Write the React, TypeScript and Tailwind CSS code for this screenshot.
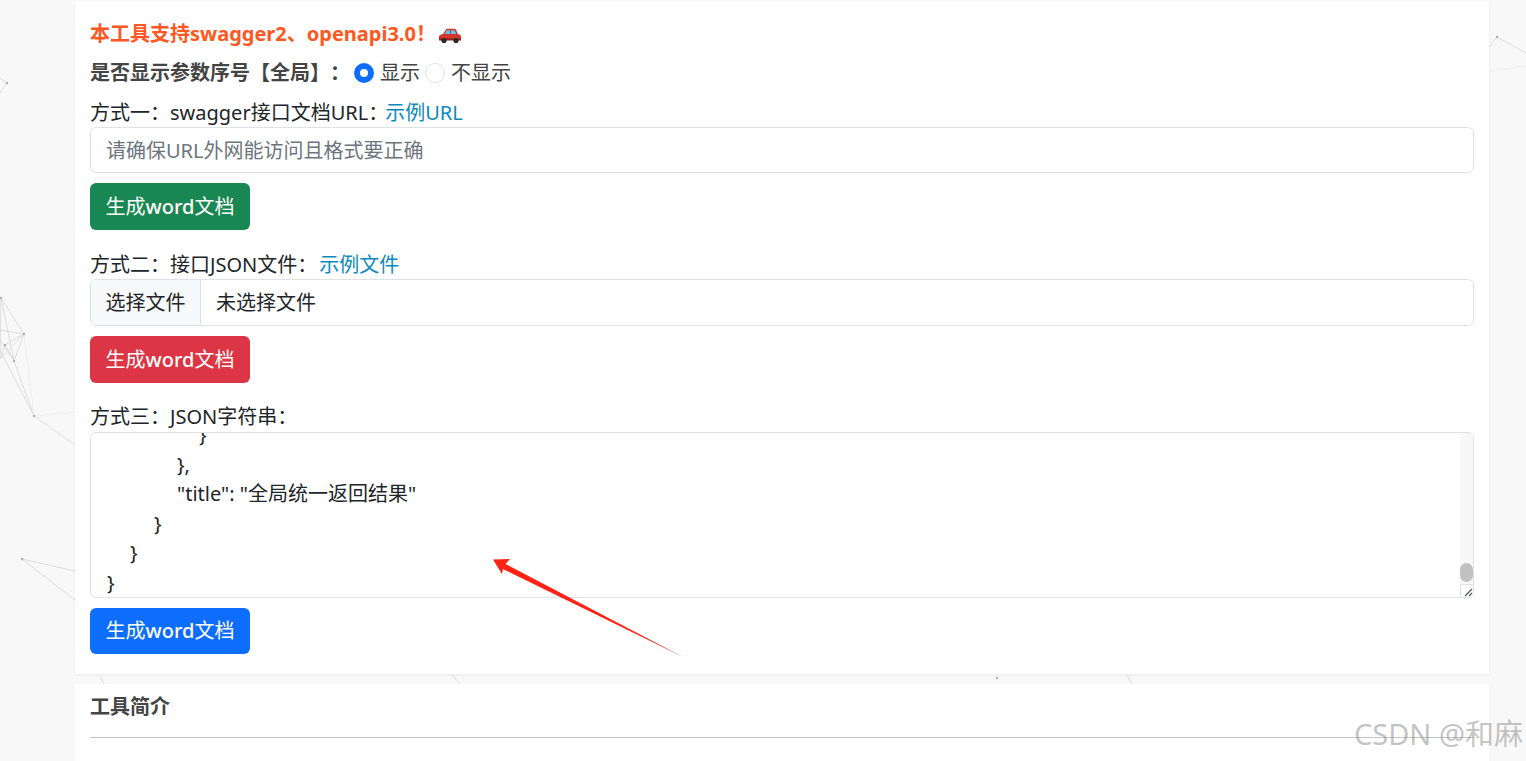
const FONT = "font-['Noto_Sans','Noto_Sans_CJK_SC',sans-serif]"

// faint particle network behind the cards
const lines = [
  [1, 298, 24, 334], [1, 298, 14, 361], [1, 298, 0, 359], [0, 330, 24, 334], [5, 345, 24, 334],
  [14, 361, 24, 334], [0, 359, 24, 334], [5, 345, 14, 361], [5, 345, 0, 359], [0, 340, 14, 361],
  [14, 361, 34, 416], [0, 350, 34, 416], [34, 416, 75, 445], [22, 559, 75, 571], [22, 559, 75, 600],
  [0, 78, 7, 83], [0, 93, 7, 83], [1489, 47, 1497, 37], [1497, 37, 1526, 53],
  [452, 675, 460, 684], [1127, 675, 1132, 684], [100, 676, 104, 684],
]
const fainter = [[24, 334, 34, 416], [34, 416, 75, 412], [1489, 71, 1526, 66]]
const dots = [[24, 334], [5, 345], [14, 361], [34, 416], [22, 559], [1497, 37], [1, 298], [7, 83], [997, 678]]

function Backdrop() {
  return (
    <svg className="absolute inset-0 w-full h-full blur-[0.5px]" viewBox="0 0 1526 761">
      {lines.map((l, i) => (
        <line key={i} x1={l[0]} y1={l[1]} x2={l[2]} y2={l[3]} stroke="#dcdcdc" strokeWidth="1" />
      ))}
      {fainter.map((l, i) => (
        <line key={i} x1={l[0]} y1={l[1]} x2={l[2]} y2={l[3]} stroke="#eeeeee" strokeWidth="1" />
      ))}
      {dots.map((d, i) => (
        <circle key={i} cx={d[0]} cy={d[1]} r="1.2" fill="#b0b0b0" />
      ))}
    </svg>
  )
}

function Car() {
  return (
    <svg width="24" height="18" viewBox="0 0 24 18" className="ml-[2px] mt-[2px]">
      <path d="M1 10.5 C1 9 3 8.500 5 8 L8 3.500 C8.500 3 9 2.800 10 2.800 H16 C17 2.800 17.500 3 18 3.800 L20 8 C22 8.500 23 9 23 11 V14 H1 Z" fill="#d3342c" />
      <path d="M8.800 4.200 H12 V8 H6.500 Z M13 4.200 H16.500 L18.500 8 H13 Z" fill="#5fc4ea" />
      <rect x="1" y="12.500" width="22" height="2" fill="#8e1f1a" />
      <circle cx="6" cy="14.500" r="2.600" fill="#2b2b2b" />
      <circle cx="18" cy="14.500" r="2.600" fill="#2b2b2b" />
    </svg>
  )
}

function GenButton({ color, height }: { color: string; height: string }) {
  return (
    <button className={`w-[160px] rounded-md text-white text-[20px] ${height} ${color}`}>
      生成<span className="font-medium">word</span>文档
    </button>
  )
}

export default function App() {
  return (
    <div className={`relative h-[761px] overflow-hidden bg-[#f8f8f8] text-[#212529] text-[20px] [text-spacing-trim:space-all] ${FONT}`}>
      <Backdrop />
      <div className="relative ml-[75px] w-[1414px] pt-[1px]">
        {/* Main form */}
        <div className="h-[673px] bg-white px-[15px] pt-[17px] shadow-[0_1px_3px_rgba(0,0,0,0.06)]">
          <div className="flex items-center h-[30px] pt-[2px] font-bold text-[#ff5722]">
            本工具支持swagger2、openapi3.0！
            <Car />
          </div>
          <div className="flex items-center h-[30px] mt-[9px] pt-[1px] text-[#444]">
            <span className="font-bold w-[264px]">是否显示参数序号【全局】：</span>
            <span className="w-[20px] h-[20px] rounded-full border-[6px] border-[#0d6efd] bg-white" />
            <span className="ml-[6px]">显示</span>
            <span className="ml-[5px] w-[20px] h-[20px] rounded-full border border-[#dee2e6] bg-white" />
            <span className="ml-[6px]">不显示</span>
          </div>

          <div className="mt-[10px] h-[30px] leading-[32px]">
            方式一：swagger接口文档URL：<a className="text-[#0d8abc] -ml-[3px]">示例URL</a>
          </div>
          <div className="h-[46px] border border-[#dee2e6] rounded-md pl-[15px] pt-[1px] flex items-center text-[#6c757d]">
            请确保URL外网能访问且格式要正确
          </div>
          <div className="mt-[10px]">
            <GenButton color="bg-[#198754]" height="h-[47px]" />
          </div>

          <div className="mt-[19px] h-[30px] leading-[32px]">
            方式二：接口JSON文件：<a className="text-[#0d8abc] ml-[2px]">示例文件</a>
          </div>
          <div className="h-[47px] border border-[#dee2e6] rounded-md flex items-center overflow-hidden">
            <div className="h-full w-[110px] flex items-center justify-center bg-[#f8f9fa] border-r border-[#dee2e6]">选择文件</div>
            <div className="ml-[15px]">未选择文件</div>
          </div>
          <div className="mt-[10px]">
            <GenButton color="bg-[#dc3545]" height="h-[47px]" />
          </div>

          <div className="mt-[18px] h-[31px] leading-[32px]">方式三：JSON字符串：</div>
          <div className="relative h-[166px] border border-[#dee2e6] rounded-md overflow-hidden flex flex-col justify-end leading-[29.5px]">
            <div className="pl-[108px]">{"}"}</div>
            <div className="pl-[86px]">{"},"}</div>
            <div className="pl-[86px]">{'"title": "全局统一返回结果"'}</div>
            <div className="pl-[63px]">{"}"}</div>
            <div className="pl-[39px]">{"}"}</div>
            <div className="pl-[16px]">{"}"}</div>
            {/* scrollbar + resize corner */}
            <div className="absolute right-0 top-0 bottom-0 w-[13px] bg-[#f7f7f7] flex flex-col justify-end">
              <div className="h-[19px] w-[13px] rounded-full bg-[#c1c1c1] mb-[2px]" />
              <div className="h-[13px] w-[13px] bg-white border-t border-l border-[#dee2e6] flex items-end justify-end">
                <svg width="9" height="9" viewBox="0 0 9 9">
                  <path d="M1 8 L8 1 M5 8 L8 5" stroke="#555" strokeWidth="1.2" />
                </svg>
              </div>
            </div>
          </div>
          <div className="mt-[10px]">
            <GenButton color="bg-[#0d6efd]" height="h-[46px]" />
          </div>
        </div>

        {/* Intro card */}
        <div className="mt-[10px] h-[77px] bg-white px-[15px]">
          <div className="h-[54px] border-b border-[#c4c4c4] pt-[8px] font-bold text-[#444] leading-[30px]">工具简介</div>
        </div>
      </div>

      {/* Annotation arrow */}
      <svg className="absolute left-0 top-0 pointer-events-none" width="1526" height="761" viewBox="0 0 1526 761">
        <path d="M493 559.500 L510 559 L505.500 564 L683 657 L503 569 L502 574 Z" fill="#ff2216" />
      </svg>

      {/* Watermark */}
      <div className="absolute right-[3px] top-[714px] text-[29px] leading-[40px] text-[#8a8a8a]/50">CSDN @和麻</div>
    </div>
  )
}
